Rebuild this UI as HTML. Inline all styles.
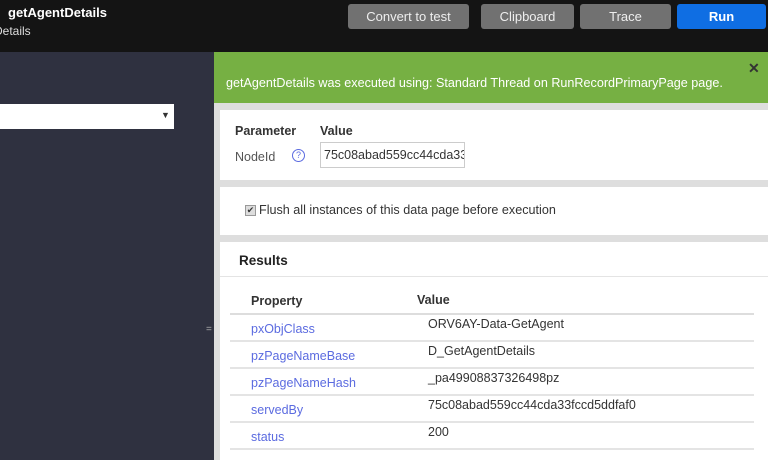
<!DOCTYPE html>
<html><head><style>
*{margin:0;padding:0;box-sizing:border-box}
body{width:768px;height:460px;overflow:hidden;font-family:"Liberation Sans",sans-serif;background:#dedede;position:relative;font-size:12px;color:#333}
.a{position:absolute}
.top{left:0;top:0;width:768px;height:52px;background:#141414}
.btn{position:absolute;top:4px;height:25px;border-radius:3px;background:#717171;color:#eee;font-size:13px;text-align:center;line-height:25px}
.left{left:0;top:52px;width:214px;height:408px;background:#2f3140}
.green{left:214px;top:52px;width:554px;height:51px;background:#76b043;color:#fff;font-size:12.6px}
.card{background:#fff;left:220px;width:548px}
.row{position:absolute;left:230px;width:524px;height:27px;border-bottom:2px solid #e4e4e4;font-size:12.5px}
.row .p{position:absolute;left:21px;top:7px;color:#5b6be0}
.row .v{position:absolute;left:198px;top:2px;color:#333}
</style></head><body>
<div class="a top"></div>
<div class="a" style="left:8px;top:5px;color:#fff;font-weight:bold;font-size:13px">getAgentDetails</div>
<div class="a" style="left:-6px;top:24px;color:#ddd;font-size:12px">Details</div>
<div class="btn" style="left:348px;width:121px">Convert to test</div>
<div class="btn" style="left:481px;width:93px">Clipboard</div>
<div class="btn" style="left:580px;width:91px">Trace</div>
<div class="btn" style="left:677px;width:89px;background:#0f6ee3;color:#fff;font-weight:bold">Run</div>
<div class="a left"></div>
<div class="a" style="left:0;top:104px;width:174px;height:25px;background:#fff"></div>
<div class="a" style="left:161px;top:110px;font-size:9px;color:#333">▼</div>
<div class="a" style="left:206px;top:324px;color:#aaa;font-size:10px">=</div>
<div class="a green"><span style="position:absolute;left:12px;top:24px">getAgentDetails was executed using: Standard Thread on RunRecordPrimaryPage page.</span><span style="position:absolute;left:534px;top:8px;font-weight:bold;color:#333;font-size:14px">✕</span></div>
<div class="a card" style="top:110px;height:70px"></div>
<div class="a" style="left:235px;top:124px;font-weight:bold;font-size:12.5px">Parameter</div>
<div class="a" style="left:320px;top:124px;font-weight:bold;font-size:12.5px">Value</div>
<div class="a" style="left:235px;top:150px;color:#555;font-size:12.5px">NodeId</div>
<div class="a" style="left:292px;top:149px;width:13px;height:13px;border:1px solid #5b6be0;border-radius:50%;color:#5b6be0;font-size:9px;text-align:center;line-height:11px">?</div>
<div class="a" style="left:320px;top:142px;width:145px;height:26px;border:1px solid #ccc;padding:5px 3px;overflow:hidden;white-space:nowrap;color:#333;font-size:12.5px">75c08abad559cc44cda33</div>
<div class="a card" style="top:187px;height:48px"></div>
<div class="a" style="left:245px;top:205px;width:11px;height:11px;background:#ddd;border:1px solid #999;font-size:9px;line-height:9px;text-align:center">✔</div>
<div class="a" style="left:259px;top:203px;font-size:12.6px">Flush all instances of this data page before execution</div>
<div class="a card" style="top:242px;height:218px"></div>
<div class="a" style="left:239px;top:253px;font-size:13.5px;font-weight:bold;color:#222">Results</div>
<div class="a" style="left:220px;top:276px;width:548px;height:1px;background:#e4e4e4"></div>
<div class="a" style="left:230px;top:287px;width:524px;height:28px;border-bottom:2px solid #ddd;font-size:12.5px"><span style="position:absolute;left:21px;top:7px;font-weight:bold">Property</span><span style="position:absolute;left:187px;top:6px;font-weight:bold">Value</span></div>
<div class="row" style="top:315px"><span class="p">pxObjClass</span><span class="v">ORV6AY-Data-GetAgent</span></div>
<div class="row" style="top:342px"><span class="p">pzPageNameBase</span><span class="v">D_GetAgentDetails</span></div>
<div class="row" style="top:369px"><span class="p">pzPageNameHash</span><span class="v">_pa49908837326498pz</span></div>
<div class="row" style="top:396px"><span class="p">servedBy</span><span class="v">75c08abad559cc44cda33fccd5ddfaf0</span></div>
<div class="row" style="top:423px"><span class="p">status</span><span class="v">200</span></div>
</body></html>
